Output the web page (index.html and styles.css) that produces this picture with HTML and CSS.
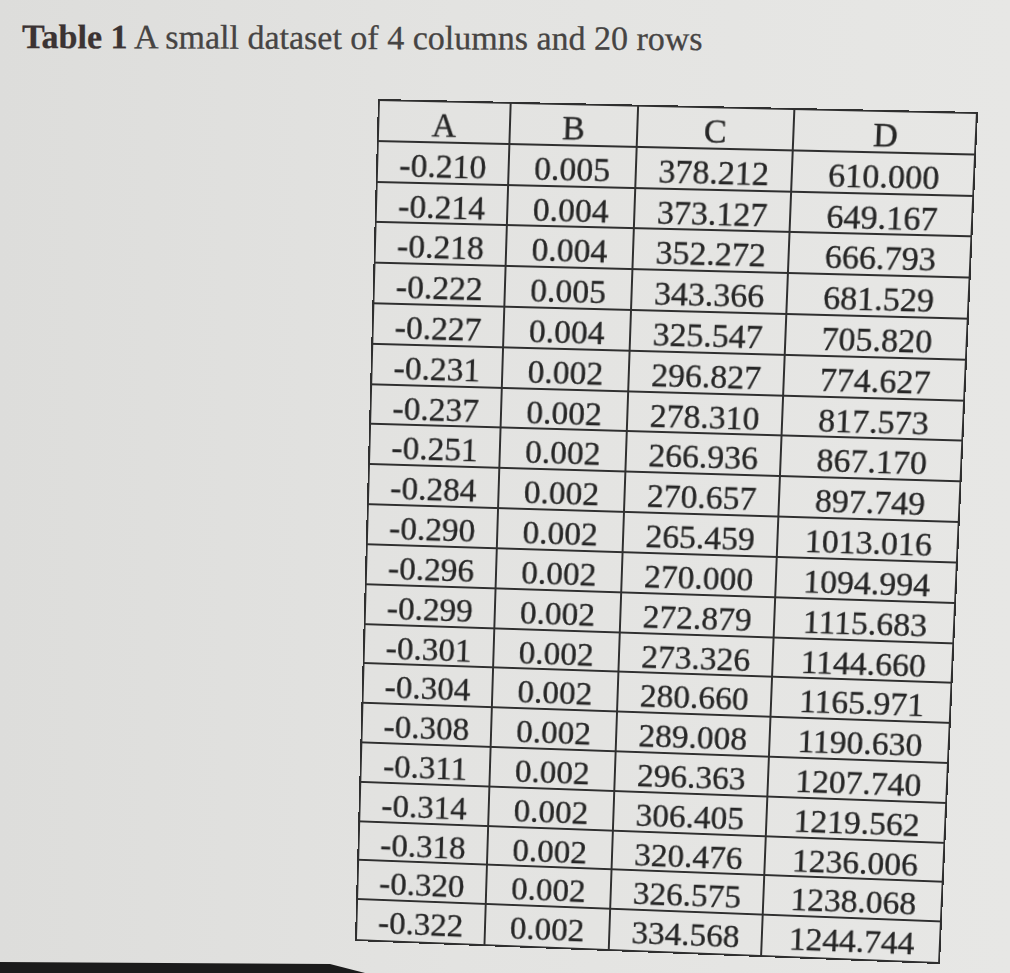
FILE: index.html
```html
<!DOCTYPE html>
<html lang="en">
<head>
<meta charset="utf-8">
<title>Table 1</title>
<link rel="stylesheet" href="styles.css">
</head>
<body>
<div class="page">
  <p class="caption"><b>Table 1</b> A small dataset of 4 columns and 20 rows</p>
  <div class="sheet">
    <div class="c">A</div><div class="c">B</div><div class="c">C</div><div class="c">D</div>
    <div class="c">-0.210</div><div class="c">0.005</div><div class="c">378.212</div><div class="c">610.000</div>
    <div class="c">-0.214</div><div class="c">0.004</div><div class="c">373.127</div><div class="c">649.167</div>
    <div class="c">-0.218</div><div class="c">0.004</div><div class="c">352.272</div><div class="c">666.793</div>
    <div class="c">-0.222</div><div class="c">0.005</div><div class="c">343.366</div><div class="c">681.529</div>
    <div class="c">-0.227</div><div class="c">0.004</div><div class="c">325.547</div><div class="c">705.820</div>
    <div class="c">-0.231</div><div class="c">0.002</div><div class="c">296.827</div><div class="c">774.627</div>
    <div class="c">-0.237</div><div class="c">0.002</div><div class="c">278.310</div><div class="c">817.573</div>
    <div class="c">-0.251</div><div class="c">0.002</div><div class="c">266.936</div><div class="c">867.170</div>
    <div class="c">-0.284</div><div class="c">0.002</div><div class="c">270.657</div><div class="c">897.749</div>
    <div class="c">-0.290</div><div class="c">0.002</div><div class="c">265.459</div><div class="c">1013.016</div>
    <div class="c">-0.296</div><div class="c">0.002</div><div class="c">270.000</div><div class="c">1094.994</div>
    <div class="c">-0.299</div><div class="c">0.002</div><div class="c">272.879</div><div class="c">1115.683</div>
    <div class="c">-0.301</div><div class="c">0.002</div><div class="c">273.326</div><div class="c">1144.660</div>
    <div class="c">-0.304</div><div class="c">0.002</div><div class="c">280.660</div><div class="c">1165.971</div>
    <div class="c">-0.308</div><div class="c">0.002</div><div class="c">289.008</div><div class="c">1190.630</div>
    <div class="c">-0.311</div><div class="c">0.002</div><div class="c">296.363</div><div class="c">1207.740</div>
    <div class="c">-0.314</div><div class="c">0.002</div><div class="c">306.405</div><div class="c">1219.562</div>
    <div class="c">-0.318</div><div class="c">0.002</div><div class="c">320.476</div><div class="c">1236.006</div>
    <div class="c">-0.320</div><div class="c">0.002</div><div class="c">326.575</div><div class="c">1238.068</div>
    <div class="c">-0.322</div><div class="c">0.002</div><div class="c">334.568</div><div class="c">1244.744</div>
  </div>
</div>
<div class="bezel"></div>
</body>
</html>
```
FILE: styles.css
```css
html, body {
  margin: 0;
  padding: 0;
  height: 100%;
}
body {
  background: linear-gradient(90deg, #dddddb 0%, #e3e3e1 45%, #e7e7e5 100%);
  font-family: "Liberation Serif", "Times New Roman", serif;
  color: #2c2c2c;
  overflow: hidden;
}
.page {
  padding-top: 17px;
}
.caption {
  margin: 0 0 0 22px;
  font-size: 34px;
  line-height: 40px;
  color: #464443;
  white-space: nowrap;
  -webkit-text-stroke: 0.3px #464443;
  transform-origin: 0 50%;
  transform: rotate(0.18deg);
}
.caption b {
  color: #3b3333;
  -webkit-text-stroke: 0.3px #3b3333;
}
.sheet {
  box-sizing: border-box;
  margin: 42px 0 0 378px;
  width: 600px;
  height: 861px;
  border: 2px solid #2f2f2f;
  display: grid;
  grid-template-columns: 133px 128px 156px 181px;
  grid-template-rows: repeat(21, 1fr);
  transform-origin: 0 0;
  transform: matrix3d(0.987592, 0.021398, 0, -0.00002068,
                      -0.027376, 1.00222, 0, 0.00002884,
                      0, 0, 1, 0,
                      0, 0, 0, 1);
}
.c {
  box-sizing: border-box;
  border-right: 2px solid #2f2f2f;
  border-bottom: 2px solid #2f2f2f;
  text-align: center;
  font-size: 34px;
  line-height: 38px;
  padding-top: 4px;
  color: #262626;
  -webkit-text-stroke: 0.35px #262626;
  overflow: hidden;
  white-space: nowrap;
}
.c:nth-child(4n) {
  border-right: 0;
}
.c:nth-last-child(-n+4) {
  border-bottom: 0;
}
.bezel {
  position: fixed;
  left: 0;
  bottom: 0;
  width: 380px;
  height: 11px;
  background: #1b1b1b;
  clip-path: polygon(0 0, 330px 2px, 365px 11px, 0 11px);
}
```
